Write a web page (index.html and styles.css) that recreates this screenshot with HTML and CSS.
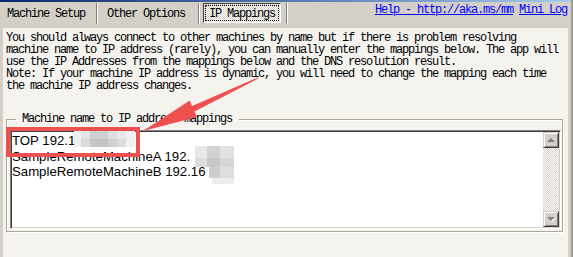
FILE: index.html
```html
<!DOCTYPE html>
<html lang="en">
<head>
    <meta charset="UTF-8">
    <title>IP Mappings</title>
    <link rel="stylesheet" href="styles.css">
</head>
<body>
    <div class="titlebar"></div>
    <div class="toolbar">
        <div class="tab">Machine Setup</div>
        <div class="sep"></div>
        <div class="tab tab-two">Other Options</div>
        <div class="sep"></div>
        <div class="tab active"><span class="focus">IP Mappings</span></div>
        <div class="sep"></div>
        <div class="links"><a href="#">Help - http://aka.ms/mm</a> <a href="#">Mini Log</a></div>
    </div>

    <div class="panel">
        <p class="intro">You should always connect to other machines by name but if there is problem resolving machine name to IP address (rarely), you can manually enter the mappings below. The app will use the IP Addresses from the mappings below and the DNS resolution result.<br>Note: If your machine IP address is dynamic, you will need to change the mapping each time the machine IP address changes.</p>

        <fieldset class="group">
            <legend>Machine name to IP address mappings</legend>
            <div class="list">
                <div class="items">
                    <div>TOP 192.1</div>
                    <div>SampleRemoteMachineA 192.</div>
                    <div>SampleRemoteMachineB 192.16</div>
                </div>
                <div class="scrollbar">
                    <div class="scroll-btn"><span class="arrow-up"></span></div>
                    <div class="track"></div>
                    <div class="scroll-btn"><span class="arrow-down"></span></div>
                </div>
            </div>
        </fieldset>
    </div>

    <!-- screenshot markup: mosaic + red box + arrow -->
    <svg class="annotation" width="573" height="257" viewBox="0 0 573 257">
        <rect x="74" y="131" width="7" height="16" fill="#efefef"/>
        <rect x="81" y="131" width="9" height="8" fill="#e4e4e4"/>
        <rect x="81" y="139" width="9" height="8" fill="#dadada"/>
        <rect x="90" y="131" width="9" height="8" fill="#d0d0d0"/>
        <rect x="90" y="139" width="9" height="8" fill="#c6c6c6"/>
        <rect x="99" y="131" width="9" height="8" fill="#cfcfcf"/>
        <rect x="99" y="139" width="9" height="8" fill="#c4c4c4"/>
        <rect x="108" y="131" width="9" height="8" fill="#dedede"/>
        <rect x="108" y="139" width="9" height="8" fill="#d0d0d0"/>
        <rect x="117" y="131" width="9" height="8" fill="#e8e8e8"/>
        <rect x="117" y="139" width="9" height="8" fill="#dcdcdc"/>
        <rect x="126" y="131" width="9" height="16" fill="#f0f0f0"/>

        <rect x="195" y="146" width="12" height="12" fill="#e8e8e8"/>
        <rect x="207" y="146" width="13" height="12" fill="#d2d2d2"/>
        <rect x="220" y="146" width="14" height="12" fill="#e2e2e2"/>
        <rect x="195" y="158" width="12" height="9" fill="#dcdcdc"/>
        <rect x="207" y="158" width="13" height="9" fill="#c8c8c8"/>
        <rect x="220" y="158" width="14" height="9" fill="#d6d6d6"/>
        <rect x="209" y="167" width="11" height="11" fill="#cdcdcd"/>
        <rect x="220" y="167" width="14" height="11" fill="#dedede"/>
        <rect x="212" y="178" width="22" height="6" fill="#ececec"/>

        <rect x="8" y="129" width="130" height="26" fill="none" stroke="#ee4f4f" stroke-width="4"/>
        <polygon fill="#ee4f4f" points="258.2,78.5 194.5,111.5 196.9,117 143,131 189.7,100.6 192.1,106.1 257.8,77.5"/>
    </svg>
</body>
</html>
```

FILE: styles.css
```css
body {
    margin: 0;
    width: 571px;
    height: 257px;
    background-color: #d4d0c8;
    border-right: 2px solid #a09c94;
    position: relative;
    overflow: hidden;
    font-family: "Liberation Mono", "DejaVu Sans Mono", monospace;
    font-size: 12px;
    letter-spacing: -1.2px;
    color: #000;
}
.titlebar {
    height: 2px;
    background: linear-gradient(to right, #0a246a, #a6caf0);
}
.toolbar {
    display: flex;
    align-items: flex-start;
    height: 26px;
    padding-top: 1px;
    padding-right: 4px;
    box-sizing: border-box;
}
.tab {
    height: 20px;
    line-height: 20px;
    padding: 1px 6px 0 6px;
    box-sizing: border-box;
}
.tab:first-child {
    margin-left: 1px;
}
.tab-two {
    padding-right: 8px;
}
.sep {
    width: 0;
    height: 21px;
    border-left: 1px solid #808080;
    border-right: 1px solid #fff;
    margin: 0 3px 0 5px;
}
.tab.active {
    padding: 1px;
    border: 1px solid;
    border-color: #404040 #fff #fff #404040;
    background: repeating-conic-gradient(#fff 0 25%, #d4d0c8 0 50%) 0 0 / 2px 2px;
}
.focus {
    display: block;
    height: 16px;
    line-height: 14px;
    padding: 1px 3px 0 3px;
    box-sizing: border-box;
    border: 1px dotted #000;
}
.links {
    margin-left: auto;
    margin-top: 1px;
    line-height: 12px;
}
.links a {
    color: #0000ff;
}
.panel {
    margin: 0 3px;
    height: 229px;
    background-color: #f4f3ee;
    padding: 4px 0 0 3px;
    box-sizing: border-box;
}
.intro {
    margin: 0;
    width: 558px;
    line-height: 12px;
}
.group {
    margin: 21px 5px 0 0;
    padding: 5px 1px 2px 3px;
    border: 1px solid #aca899;
    box-shadow: 1px 1px 0 #fff, inset 1px 1px 0 #fff;
}
.group legend {
    margin-left: 6px;
    padding: 0 7px 0 6px;
    line-height: 12px;
}
.list {
    display: flex;
    height: 99px;
    box-sizing: border-box;
    padding: 1px;
    border: 1px solid;
    border-color: #808080 #fff #fff #808080;
    box-shadow: inset 1px 1px 0 #404040, inset -1px -1px 0 #d4d0c8;
    background-color: #fff;
    font-family: "Liberation Sans", Arial, sans-serif;
    font-size: 13.2px;
    letter-spacing: 0;
}
.items {
    flex: 1;
    padding-top: 1px;
    line-height: 15.5px;
    background-color: #fff;
}
.scrollbar {
    width: 16px;
    display: flex;
    flex-direction: column;
}
.scroll-btn {
    height: 16px;
    box-sizing: border-box;
    background-color: #d4d0c8;
    border: 1px solid;
    border-color: #d4d0c8 #404040 #404040 #d4d0c8;
    box-shadow: inset 1px 1px 0 #fff, inset -1px -1px 0 #808080;
    display: flex;
    align-items: center;
    justify-content: center;
}
.track {
    flex: 1;
    background: repeating-conic-gradient(#fff 0 25%, #d4d0c8 0 50%) 0 0 / 2px 2px;
}
.arrow-up {
    width: 0;
    height: 0;
    border-left: 4px solid transparent;
    border-right: 4px solid transparent;
    border-bottom: 4px solid #808080;
}
.arrow-down {
    width: 0;
    height: 0;
    border-left: 4px solid transparent;
    border-right: 4px solid transparent;
    border-top: 4px solid #808080;
    filter: drop-shadow(1px 1px 0 #fff);
}
.annotation {
    position: absolute;
    top: 0;
    left: 0;
    pointer-events: none;
}
```
